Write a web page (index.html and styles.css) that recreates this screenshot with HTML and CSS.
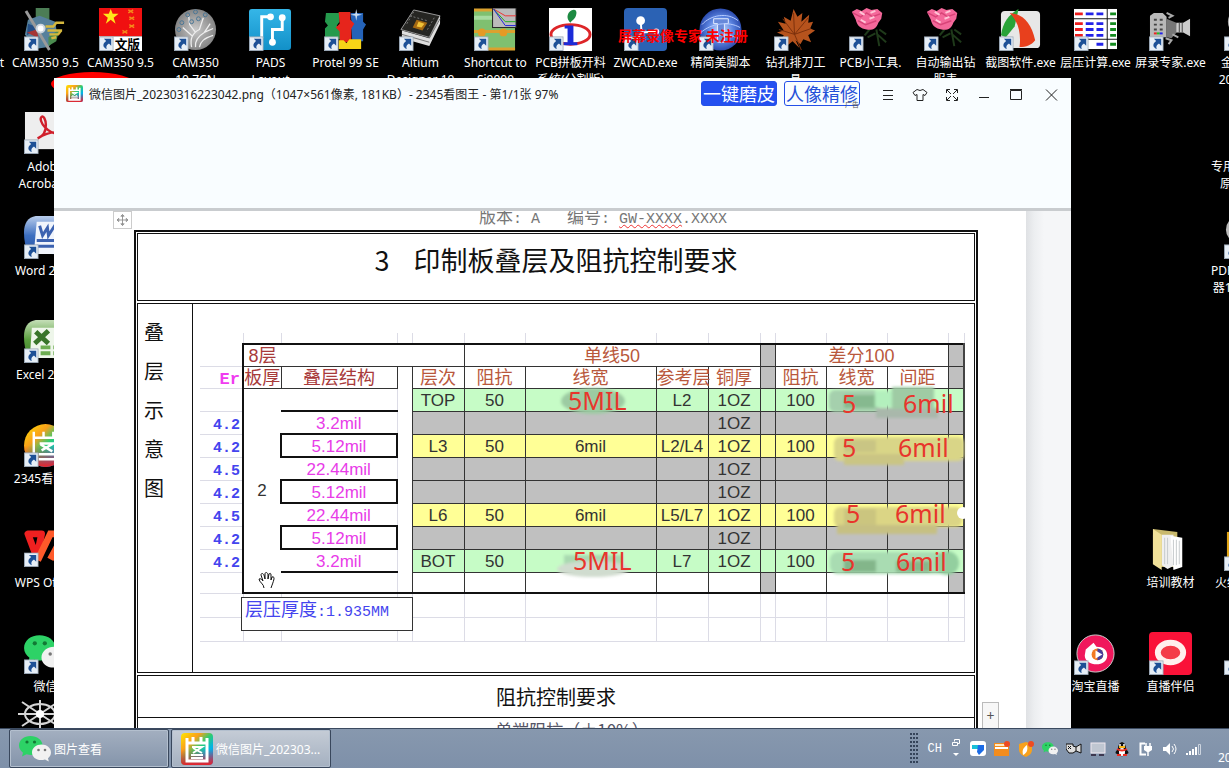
FILE: index.html
```html
<!DOCTYPE html>
<html lang="zh-CN">
<head>
    <meta charset="UTF-8">
    <meta name="viewport" content="width=device-width, initial-scale=1.0">
    <title>2345看图王</title>
    <link rel="stylesheet" href="styles.css">
</head>

<body>
    <!-- shared icons -->
    <svg class="sprite" aria-hidden="true">
        <defs>
            <linearGradient id="rainbow" x1="0" y1="0" x2="1" y2="1">
                <stop offset="0" stop-color="#ffe600"/><stop offset=".3" stop-color="#f9a01b"/><stop offset=".5" stop-color="#2ecc71"/><stop offset=".7" stop-color="#00b4e6"/><stop offset="1" stop-color="#2b6de0"/>
            </linearGradient>
            <linearGradient id="hot" x1="0" y1="0" x2="0" y2="1">
                <stop offset=".5" stop-color="#e8222a" stop-opacity="0"/><stop offset="1" stop-color="#e8222a"/>
            </linearGradient>
            <linearGradient id="pads" x1="0" y1="0" x2="0" y2="1">
                <stop offset="0" stop-color="#35b6e8"/><stop offset="1" stop-color="#1290c8"/>
            </linearGradient>
            <linearGradient id="word" x1="0" y1="0" x2="0" y2="1">
                <stop offset="0" stop-color="#b9cdec"/><stop offset=".5" stop-color="#3d6fc0"/><stop offset="1" stop-color="#2450a0"/>
            </linearGradient>
            <linearGradient id="excel" x1="0" y1="0" x2="0" y2="1">
                <stop offset="0" stop-color="#c5dfb8"/><stop offset=".5" stop-color="#5ba03f"/><stop offset="1" stop-color="#3b7a25"/>
            </linearGradient>
            <radialGradient id="globe">
                <stop offset="0" stop-color="#cfe0ff"/><stop offset=".6" stop-color="#5a83e0"/><stop offset="1" stop-color="#2c4cae"/>
            </radialGradient>
            <radialGradient id="moon">
                <stop offset="0" stop-color="#c8c8c8"/><stop offset="1" stop-color="#858585"/>
            </radialGradient>
            <filter id="soft"><feGaussianBlur stdDeviation="1.500"/></filter>
        </defs>
        <symbol id="shortcut" viewBox="0 0 15 15">
            <rect x=".5" y=".5" width="14" height="14" fill="#e6eef6" stroke="#9aa7b5"/>
            <path d="M5 2.500h7.500v7l-2.300-2.200C7.500 9 7 10.500 8 13 4 11.500 3 8 7.300 4.800z" fill="#1d5096"/>
        </symbol>
        <symbol id="viewer" viewBox="0 0 32 32">
            <rect width="32" height="32" rx="4" fill="url(#rainbow)"/>
            <rect width="32" height="32" rx="4" fill="url(#hot)"/>
            <path d="M6 5v23h20V5M12 4v5M20 4v5M5 10h22" fill="none" stroke="#fff" stroke-width="3"/>
            <path d="M11 14h10l-9 6M12 15l9 5M10 22h12M10 25h12" fill="none" stroke="#fff" stroke-width="2"/>
        </symbol>
        <symbol id="wechat" viewBox="0 0 32 27">
            <path d="M11.500 1C5 1 0 5 0 10.500c0 3 1.700 5.500 4 7.200L3 21.500l4.500-2.300c9 2.500 16-2 16-8.700C23.500 5 18 1 11.500 1z" fill="#2dd266"/>
            <circle cx="8" cy="7" r="1.600" fill="#127a35"/><circle cx="15.500" cy="7" r="1.600" fill="#127a35"/>
            <path d="M22.500 9.500c5.200 0 9.500 3.500 9.500 8 0 2.300-1.200 4.300-3 5.800l.8 3.200-3.800-2C19 26.500 13 23 13 17.500c0-4.500 4.300-8 9.500-8z" fill="#f1f1f1"/>
            <circle cx="19.500" cy="15" r="1.300" fill="#777"/><circle cx="26" cy="15" r="1.300" fill="#777"/>
        </symbol>
        <symbol id="rose" viewBox="0 0 44 44">
            <path d="M25 22l3 17M24 26l-8 4M26 27l9 8M18 22l-5 6M28 22l7 5" stroke="#1f3a1a" stroke-width="2" fill="none"/>
            <path d="M0 4l5-3 5 2 5-3 5 2 6-1 5 4-1 6-3 4c-2 6-6 8-12 7C9 21 5 18 4 12z" fill="#f4689a"/>
            <path d="M1 5l8 4 6-4 6 4 8-3M6 13l8 4 11-4" stroke="#d84478" stroke-width="1.500" fill="none"/>
            <path d="M8 4l5 3M19 5l5-2M9 12l5 3M18 11l5-2" stroke="#ffc4d6" stroke-width="2"/>
        </symbol>
    </svg>

    <main class="desktop">
        <div class="red-blob"></div>
        <nav class="icons">
            <a href="#" class="icon c0 r1 cut"><span>t</span></a>
            <a href="#" class="icon c1 r1">
                <svg viewBox="0 0 44 44">
                    <path d="M12 0h14v12H12z" fill="#4c7d55"/><path d="M4 12l12-4 16 6 2 14-9 12-14 2L1 27z" fill="#56809c"/>
                    <path d="M4 16l11 4-12 8z" fill="#244f86"/><path d="M3 25l10-3 2 9z" fill="#a63635"/>
                    <path d="M25 30l11-8-3 12-8 5z" fill="#4b8c50"/>
                    <path d="M22 19h8l3-4h8M24 23h15M26 27h9l3-4M28 31l5-1" stroke="#d5b83e" stroke-width="2.500" fill="none"/>
                    <path d="M2 3l24 40" stroke="#9a9a9a" stroke-width="3"/><circle cx="17" cy="21" r="5" fill="#ccd5df"/><circle cx="17" cy="21" r="3" fill="#fff"/>
                    <use href="#shortcut" y="29" width="15" height="15"/>
                </svg><span>CAM350 9.5</span></a>
            <a href="#" class="icon c2 r1">
                <svg viewBox="0 0 44 44">
                    <rect width="44" height="29" fill="#f01010"/><rect y="29" width="44" height="15" fill="#fff"/>
                    <path d="M12 1l2 5h6l-5 4 2 6-5-4-5 4 2-6-5-4h6z" fill="#ffe81a"/>
                    <path d="M30 2l5 3M30 5l5-3M31 9l5 3M31 12l5-3M31 17l5 3M31 20l5-3M24 23l5 3M24 26l5-3" stroke="#f58a1a" stroke-width="1.500"/>
                    <text x="16" y="42" class="flag-text">文版</text>
                    <use href="#shortcut" y="29" width="15" height="15"/>
                </svg><span>CAM350 9.5</span></a>
            <a href="#" class="icon c3 r1">
                <svg viewBox="0 0 44 44">
                    <circle cx="22" cy="22" r="21" fill="url(#moon)"/>
                    <path d="M18 40c-2-9 2-15 8-18l4-12M22 40c-1-8 4-12 9-15l6-9M26 40c1-6 5-9 14-12M22 25l-6-8-1-9M19 29l-10-9M31 25l9-4" stroke="#eee" stroke-width="1.300" fill="none"/>
                    <g fill="none" stroke="#4a7696"><circle cx="8" cy="15" r="2"/><circle cx="14" cy="7" r="2"/><circle cx="22" cy="4" r="2"/><circle cx="18" cy="14" r="2"/><circle cx="32" cy="7" r="2"/><circle cx="25" cy="11" r="2"/><circle cx="5" cy="22" r="2"/></g>
                    <use href="#shortcut" y="29" width="15" height="15"/>
                </svg><span>CAM350<br>10.7CN</span></a>
            <a href="#" class="icon c4 r1">
                <svg viewBox="0 0 44 44">
                    <rect y="1" width="43" height="42" rx="3" fill="url(#pads)"/>
                    <path d="M13 31V9h8M34 11v11H24v12" fill="none" stroke="#fff" stroke-width="3"/>
                    <circle cx="22" cy="9" r="3.500" fill="#fff"/><circle cx="34" cy="10" r="3.500" fill="#fff"/><circle cx="24" cy="35" r="3.500" fill="#fff"/>
                    <use href="#shortcut" y="29" width="15" height="15"/>
                </svg><span>PADS<br>Layout</span></a>
            <a href="#" class="icon c5 r1">
                <svg viewBox="0 0 44 44">
                    <path d="M2 5h14v9l-3 4 4 5v9H1V21l3-3-3-4z" fill="#259a4d"/>
                    <path d="M27 5h13v9l3 3-3 5v12H29l-1-12-4-5 4-4z" fill="#2563b8"/>
                    <path d="M15 4h12v8l4 4-3 5v14H16V24l-4-4 4-4z" fill="#e6251c"/>
                    <path d="M15 33h5l3 3 3-4h12v10H15z" fill="#f7d417"/>
                    <path d="M33 1l1 5 5 1-5 1-1 5-1-5-5-1 5-1z" fill="#cde"/>
                    <use href="#shortcut" y="29" width="15" height="15"/>
                </svg><span>Protel 99 SE</span></a>
            <a href="#" class="icon c6 r1">
                <svg viewBox="0 0 44 44">
                    <path d="M15 2l27 6-11 22L2 22z" fill="#252522" stroke="#999"/><path d="M42 8v8L31 39 3 31v-8l28 8z" fill="#dedede"/>
                    <path d="M31 31l11-20M3 27l28 8" stroke="#777"/><path d="M18 12l11 3-5 8-10-3z" fill="#a46812"/><path d="M20 14l6 2-3 4-5-1z" fill="#f0c238"/>
                    <path d="M15 4l-8 14M36 10l-8 14M11 8l18 5" stroke="#777" stroke-dasharray="2"/>
                    <use href="#shortcut" y="29" width="15" height="15"/>
                </svg><span>Altium<br>Designer 10</span></a>
            <a href="#" class="icon c7 r1">
                <svg viewBox="0 0 44 44">
                    <rect y="1" width="42" height="42" fill="#7fc070"/><path d="M0 2h20M0 42h42M0 24h42" stroke="#dba12e" stroke-width="3"/>
                    <path d="M0 10h42" stroke="#a7dba0" stroke-width="4"/><circle cx="8" cy="25" r="4" fill="#e59a25"/><circle cx="30" cy="25" r="4" fill="#e59a25"/>
                    <rect x="19" y="0" width="24" height="20" fill="#bbb" stroke="#222"/>
                    <path d="M20 1l12 7h11" stroke="#e33" fill="none"/><path d="M20 1l12 13h11" stroke="#2a2" fill="none"/><path d="M20 1l12 17h11" stroke="#22d" fill="none"/>
                    <use href="#shortcut" y="29" width="15" height="15"/>
                </svg><span>Shortcut to<br>Si9000</span></a>
            <a href="#" class="icon c8 r1">
                <svg viewBox="0 0 44 44">
                    <rect width="44" height="44" fill="#fff"/>
                    <ellipse cx="22" cy="27" rx="20" ry="10" fill="none" stroke="#dd2528" stroke-width="3"/>
                    <path d="M16 18h9v17h4v3H15v-3h4V21h-3z" fill="#1b2bd8"/><path d="M20 5c4-5 9-4 8 1-1 6-4 6-6 9-3-3-4-6-2-10z" fill="#1d8a42"/>
                    <use href="#shortcut" y="29" width="15" height="15"/>
                </svg><span>PCB拼板开料<br>系统(分割版)</span></a>
            <a href="#" class="icon c9 r1">
                <svg viewBox="0 0 44 44">
                    <rect width="44" height="44" rx="4" fill="#2b62b4"/>
                    <path d="M17 13l1 12-7 10M18 25l14-1" stroke="#fff" stroke-width="2" fill="none"/><circle cx="17" cy="13" r="4.500" fill="#fff"/><circle cx="33" cy="24" r="3" fill="#fff"/>
                    <use href="#shortcut" y="29" width="15" height="15"/>
                </svg><span>ZWCAD.exe</span></a>
            <a href="#" class="icon c10 r1">
                <svg viewBox="0 0 44 44">
                    <circle cx="22" cy="22" r="21.500" fill="url(#globe)"/>
                    <path d="M15 11h15v5h-4v19h-7V16h-4z" fill="#6889da" stroke="#e5eeff"/><path d="M3 17c9-10 26-13 37-4M2 25c10-9 28-12 40-5M6 34c9-7 23-9 34-3" stroke="#b5cbff" fill="none"/>
                    <use href="#shortcut" y="29" width="15" height="15"/>
                </svg><span>精简美脚本</span></a>
            <a href="#" class="icon c11 r1">
                <svg viewBox="0 0 44 44">
                    <path d="M20 1l4 8 5-4-1 9 8-7-1 8 5-1-3 7 5 2-7 5 3 7-8-3-3 5-5-4 4 8-7-7-6 5 1-7-8 2 4-6-7-3 7-2-6-9 8 2-2-7 7 4z" fill="#b6531d"/>
                    <path d="M21 27L20 5M21 27L9 11M21 27L35 10M21 27L5 22M21 27l17-6M21 27l7 16" stroke="#7c300c" fill="none"/>
                    <use href="#shortcut" y="29" width="15" height="15"/>
                </svg><span>钻孔排刀工<br>具</span></a>
            <a href="#" class="icon c12 r1">
                <svg viewBox="0 0 44 44"><use href="#rose" x="3" width="44" height="44"/><use href="#shortcut" y="29" width="15" height="15"/></svg><span>PCB小工具.</span></a>
            <a href="#" class="icon c13 r1">
                <svg viewBox="0 0 44 44"><use href="#rose" x="3" width="44" height="44"/><use href="#shortcut" y="29" width="15" height="15"/></svg><span>自动输出钻<br>服表</span></a>
            <a href="#" class="icon c14 r1">
                <svg viewBox="0 0 44 44">
                    <rect x="2" y="3" width="40" height="38" rx="4" fill="#e7e7e7"/><path d="M2 28C4 14 10 7 20 1l-4 18-9 11z" fill="#29a338"/><path d="M11 5c13 1 22 10 26 28-4 5-9 7-16 7C23 25 19 13 11 5z" fill="#e8401d"/>
                    <use href="#shortcut" y="29" width="15" height="15"/>
                </svg><span>截图软件.exe</span></a>
            <a href="#" class="icon c15 r1">
                <svg viewBox="0 0 44 44">
                    <rect y="1" width="44" height="41" fill="#fff"/><path d="M34 1v41M0 11h44M0 32h44" stroke="#111"/>
                    <path d="M1 6h8M1 16h8M1 22h8M1 28h8" stroke="#ee1c1c" stroke-width="3"/>
                    <path d="M12 6h8M23 6h7M12 16h8M23 16h7M12 22h8M23 22h7M12 28h8M23 28h7M23 37h7" stroke="#2222e8" stroke-width="3"/>
                    <path d="M37 6h6M37 16h6M37 22h6M37 28h6M37 37h6" stroke="#138a1e" stroke-width="3"/>
                    <use href="#shortcut" y="29" width="15" height="15"/>
                </svg><span>层压计算.exe</span></a>
            <a href="#" class="icon c16 r1">
                <svg viewBox="0 0 44 44">
                    <path d="M1 8l4-3h9l4 4v21H1z" fill="#b9b9b9"/><path d="M5 12h3M11 12h3M5 17h3M11 17h3M5 22h3M11 22h3" stroke="#444" stroke-width="2"/>
                    <path d="M18 11l10 4 2 8-7 8-5-1z" fill="#777"/><path d="M28 15h7l7-4v18l-7-4h-7z" fill="#ccc"/><path d="M34 15v10M31 15v10" stroke="#444"/>
                    <path d="M18 5l6 3-4 2M17 31l6 2-3 4M24 27l6 3" stroke="#aaa" stroke-width="2" fill="none"/><path d="M5 26h3" stroke="#e22" stroke-width="2"/><path d="M8 26h3" stroke="#2b2" stroke-width="2"/><path d="M11 26h3" stroke="#22e" stroke-width="2"/>
                    <use href="#shortcut" y="29" width="15" height="15"/>
                </svg><span>屏录专家.exe</span></a>
            <a href="#" class="icon c17 r1 edge">
                <svg viewBox="0 0 44 44"><circle cx="18" cy="14" r="14" fill="#aaa"/><use href="#shortcut" y="29" width="15" height="15"/></svg><span>&nbsp;金<br>20</span></a>

            <a href="#" class="icon c1 r2">
                <svg viewBox="0 0 44 44">
                    <rect x="1" width="42" height="38" fill="#eee"/><path d="M14 27c13-5 8-25 4-22s6 19 20 17c-8-3-16 0-24 5z" fill="none" stroke="#d01f2b" stroke-width="2.500"/>
                    <use href="#shortcut" y="28" width="15" height="15"/>
                </svg><span>Adobe<br>Acrobat 9</span></a>
            <a href="#" class="icon c1 r3">
                <svg viewBox="0 0 44 44">
                    <path d="M12 0h30v40L4 37q-4-8-4-20Q0 2 12 0z" fill="url(#word)"/><path d="M13 6h31v33H10z" fill="#f1f5fc"/>
                    <path d="M16 10l3 10 5-8 1 8 7-11M13 25h31M13 31h31" fill="none" stroke="#3c62b0" stroke-width="3"/>
                    <use href="#shortcut" y="29" width="15" height="15"/>
                </svg><span>Word 2007</span></a>
            <a href="#" class="icon c1 r4">
                <svg viewBox="0 0 44 44">
                    <path d="M12 0h30v40L4 37q-4-8-4-20Q0 2 12 0z" fill="url(#excel)"/><path d="M8 8h36v31H6z" fill="#eef6ea"/>
                    <path d="M12 12l13 12M25 11L11 24" stroke="#39752a" stroke-width="5"/><path d="M17 28h10M30 28h12M17 34h10M30 34h12M31 22h12" stroke="#6dad51" stroke-width="4"/>
                    <use href="#shortcut" y="29" width="15" height="15"/>
                </svg><span>Excel 2007</span></a>
            <a href="#" class="icon c1 r5">
                <svg viewBox="0 0 44 44">
                    <circle cx="22" cy="22" r="22" fill="url(#rainbow)"/><circle cx="22" cy="22" r="22" fill="url(#hot)"/>
                    <path d="M10 36V14h24v22M10 14V8M20 14V8M30 14V8M16 20h14l-12 7M17 21l12 7M15 31h16M15 36h16" fill="none" stroke="#fff" stroke-width="2.500"/>
                    <use href="#shortcut" y="29" width="15" height="15"/>
                </svg><span>2345看图王</span></a>
            <a href="#" class="icon c1 r6">
                <svg viewBox="0 0 44 44">
                    <path d="M4 6h14L13 30z" fill="none" stroke="#ef2020" stroke-width="7" stroke-linejoin="round"/><path d="M14 33L27 6h6M27 32L40 8" fill="none" stroke="#ff5a2a" stroke-width="7"/>
                    <use href="#shortcut" y="25" width="15" height="15"/>
                </svg><span>WPS Office</span></a>
            <a href="#" class="icon c1 r7">
                <svg viewBox="0 0 44 44"><use href="#wechat" y="2" width="44" height="37"/><use href="#shortcut" y="28" width="15" height="15"/></svg><span>微信</span></a>

            <a href="#" class="icon c17 r2 edge"><svg viewBox="0 0 44 44"></svg><span>专用<br>&nbsp;&nbsp;原</span></a>
            <a href="#" class="icon c17 r3 edge">
                <svg viewBox="0 0 44 44"><circle cx="16" cy="14" r="14" fill="#bbb"/><use href="#shortcut" y="29" width="15" height="15"/></svg><span>PDF<br>器1</span></a>
            <a href="#" class="icon c16 r6">
                <svg viewBox="0 0 44 44">
                    <path d="M4 1l25 3v36H12z" fill="#c9b96c"/><path d="M13 7h12v32l-6 3-6-4z" fill="#efefef"/><path d="M22 8l12 2v30l-9 3z" fill="#fff"/>
                    <path d="M16 10v27M19 10v27M25 12v26M28 12v26M31 13v24" stroke="#c6cacc"/><path d="M4 1l9 6v36l-9-6z" fill="#f1e19a"/>
                </svg><span>培训教材</span></a>
            <a href="#" class="icon c17 r6 edge">
                <svg viewBox="0 0 44 44"><rect x="3" y="4" width="38" height="38" fill="#e0a416"/><use href="#shortcut" y="29" width="15" height="15"/></svg><span>火绒</span></a>
            <a href="#" class="icon c15 r7">
                <svg viewBox="0 0 44 44">
                    <circle cx="22" cy="22" r="19" fill="#f0185c" stroke="#ccc"/><path d="M12 18l8-7 3 4c7 0 11 3 11 9s-5 9-11 9-12-3-12-9z" fill="#fff"/><circle cx="24" cy="23" r="6" fill="#f37a21"/><path d="M24 17a6 6 0 010 12z" fill="#473d9a"/><path d="M22 19l7 4-7 4z" fill="#fff"/>
                    <use href="#shortcut" y="29" width="15" height="15"/>
                </svg><span>淘宝直播</span></a>
            <a href="#" class="icon c16 r7">
                <svg viewBox="0 0 44 44">
                    <rect width="44" height="44" rx="4" fill="#fa1238"/><ellipse cx="22" cy="21" rx="13" ry="10" fill="#f43c48" stroke="#fff0ed" stroke-width="6"/>
                    <use href="#shortcut" y="29" width="15" height="15"/>
                </svg><span>直播伴侣</span></a>
            <a href="#" class="icon c17 r7 edge" aria-label="快捷方式">
                <svg viewBox="0 0 44 44"><use href="#shortcut" y="29" width="15" height="15"/></svg></a>
        </nav>
        <svg class="wheel" viewBox="0 0 44 28">
            <path d="M22 0v28M0 14h44M4 2l36 24M40 2L4 26" stroke="#d5d5d5" stroke-width="2"/>
            <ellipse cx="22" cy="14" rx="15" ry="10" fill="none" stroke="#d5d5d5" stroke-width="2"/><circle cx="22" cy="14" r="4" fill="#fff"/>
        </svg>
        <p class="watermark">屏幕录像专家 未注册</p>

        <section class="window">
            <header class="titlebar">
                <svg class="app-icon" viewBox="0 0 32 32"><use href="#viewer"/></svg>
                <h1>微信图片_20230316223042.png（1047×561像素, 181KB）- 2345看图王 - 第1/1张 97%</h1>
                <button class="promo promo-fill">一键磨皮</button>
                <button class="promo">人像精修<small>广告</small></button>
                <div class="controls">
                    <button aria-label="菜单"><svg viewBox="0 0 16 16"><path d="M3 3.500h10M3 8.500h10M3 12.500h10"/></svg></button>
                    <button aria-label="皮肤"><svg viewBox="0 0 16 16"><path d="M5 2.500q3 2 6 0l4 3-2 3-2-1v6H5v-6l-2 1-2-3z"/></svg></button>
                    <button aria-label="全屏"><svg viewBox="0 0 16 16"><path d="M2.500 6V2.500H6M10 2.500h3.500V6M13.500 10v3.500H10M6 13.500H2.500V10M3 3l4 4M9 9l4 4M13 3L9 7M7 9l-4 4"/></svg></button>
                    <button aria-label="最小化"><svg viewBox="0 0 16 16"><path d="M3 10.500h10"/></svg></button>
                    <button aria-label="最大化"><svg viewBox="0 0 16 16"><path d="M2.500 3.500h11v9h-11zM2 2.500h12"/></svg></button>
                    <button class="close" aria-label="关闭"><svg viewBox="0 0 16 16"><path d="M2 2.500l11 11M13 2.500l-11 11"/></svg></button>
                </div>
            </header>
            <div class="toolbar"></div>

            <div class="viewer">
                <div class="page">
                    <svg class="move-handle" viewBox="0 0 19 19"><path d="M9.500 3v13M3 9.500h13M7.500 5l2-2 2 2zM7.500 14l2 2 2-2zM5 7.500l-2 2 2 2zM14 7.500l2 2-2 2z"/></svg>
                    <button class="add-row">+</button>
                    <p class="doc-head"><b>版本</b>: A&nbsp;&nbsp; <b>编号</b>: <u>GW-XXXX</u>.XXXX</p>
                    <div class="doc">
                        <h2 class="doc-title">3&nbsp;&nbsp;&nbsp; 印制板叠层及阻抗控制要求</h2>
                        <div class="stack">
                            <div class="stack-name"><span>叠层示意图</span></div>
                            <div class="sheet">
                                <table>
                                    <colgroup>
                                        <col class="w43"><col class="w38"><col class="w116"><col class="w15"><col class="w52"><col class="w61"><col class="w131"><col class="w52"><col class="w52"><col class="w15"><col class="w51"><col class="w61"><col class="w61"><col class="w16">
                                    </colgroup>
                                    <tbody>
                                        <tr class="stub">
                                            <td></td><td></td><td></td><td></td><td></td><td></td><td></td><td></td><td></td><td></td><td></td><td></td><td></td><td class="edge-line"></td>
                                        </tr>
                                        <tr class="head top">
                                            <td class="er"></td><td class="thick-l bb">8层</td><td class="bb"></td><td class="bb"></td><td class="bb"></td>
                                            <th colspan="4" class="b brown">单线50</th><td class="b g"></td><th colspan="3" class="b brown">差分100</th><td class="b g edge-line"></td>
                                        </tr>
                                        <tr class="head">
                                            <td class="er magenta">Er</td><th class="b thick-l">板厚</th><th class="b">叠层结构</th><td></td>
                                            <th class="b brown">层次</th><th class="b brown">阻抗</th><th class="b brown">线宽</th><th class="b brown">参考层</th><th class="b brown">铜厚</th><td class="b g"></td>
                                            <th class="b brown">阻抗</th><th class="b brown">线宽</th><th class="b brown">间距</th><td class="b g edge-line"></td>
                                        </tr>
                                        <tr class="green">
                                            <td class="er"></td><td class="thick-l total" rowspan="9">2</td><td class="mil thick-b"></td><td class="gap"></td>
                                            <td class="b">TOP</td><td class="b">50</td><td class="b"></td><td class="b">L2</td><td class="b">1OZ</td><td class="b"></td><td class="b">100</td><td class="b"></td><td class="b"></td><td class="b edge-line"></td>
                                        </tr>
                                        <tr class="gray">
                                            <td class="er">4.2</td><td class="mil">3.2mil</td><td class="gap"></td>
                                            <td class="b"></td><td class="b"></td><td class="b"></td><td class="b"></td><td class="b">1OZ</td><td class="b"></td><td class="b"></td><td class="b"></td><td class="b"></td><td class="b edge-line"></td>
                                        </tr>
                                        <tr class="yellow">
                                            <td class="er">4.2</td><td class="mil box">5.12mil</td><td class="gap"></td>
                                            <td class="b">L3</td><td class="b">50</td><td class="b">6mil</td><td class="b">L2/L4</td><td class="b">1OZ</td><td class="b"></td><td class="b">100</td><td class="b"></td><td class="b"></td><td class="b edge-line"></td>
                                        </tr>
                                        <tr class="gray">
                                            <td class="er">4.5</td><td class="mil">22.44mil</td><td class="gap"></td>
                                            <td class="b"></td><td class="b"></td><td class="b"></td><td class="b"></td><td class="b">1OZ</td><td class="b"></td><td class="b"></td><td class="b"></td><td class="b"></td><td class="b edge-line"></td>
                                        </tr>
                                        <tr class="gray">
                                            <td class="er">4.2</td><td class="mil box">5.12mil</td><td class="gap"></td>
                                            <td class="b"></td><td class="b"></td><td class="b"></td><td class="b"></td><td class="b">1OZ</td><td class="b"></td><td class="b"></td><td class="b"></td><td class="b"></td><td class="b edge-line"></td>
                                        </tr>
                                        <tr class="yellow">
                                            <td class="er">4.5</td><td class="mil">22.44mil</td><td class="gap"></td>
                                            <td class="b">L6</td><td class="b">50</td><td class="b">6mil</td><td class="b">L5/L7</td><td class="b">1OZ</td><td class="b"></td><td class="b">100</td><td class="b"></td><td class="b"></td><td class="b edge-line"></td>
                                        </tr>
                                        <tr class="gray">
                                            <td class="er">4.2</td><td class="mil box">5.12mil</td><td class="gap"></td>
                                            <td class="b"></td><td class="b"></td><td class="b"></td><td class="b"></td><td class="b">1OZ</td><td class="b"></td><td class="b"></td><td class="b"></td><td class="b"></td><td class="b edge-line"></td>
                                        </tr>
                                        <tr class="green">
                                            <td class="er">4.2</td><td class="mil thick-b">3.2mil</td><td class="gap"></td>
                                            <td class="b">BOT</td><td class="b">50</td><td class="b"></td><td class="b">L7</td><td class="b">1OZ</td><td class="b"></td><td class="b">100</td><td class="b"></td><td class="b"></td><td class="b edge-line"></td>
                                        </tr>
                                        <tr class="bottom">
                                            <td class="er"></td><td></td><td class="gap"></td>
                                            <td class="b"></td><td class="b"></td><td class="b"></td><td class="b"></td><td class="b"></td><td class="b g"></td><td class="b"></td><td class="b"></td><td class="b"></td><td class="b g edge-line"></td>
                                        </tr>
                                        <tr class="spare">
                                            <td></td><td></td><td></td><td></td><td></td><td></td><td></td><td></td><td></td><td></td><td></td><td></td><td></td><td class="edge-line"></td>
                                        </tr>
                                        <tr class="spare">
                                            <td></td><td></td><td></td><td></td><td></td><td></td><td></td><td></td><td></td><td></td><td></td><td></td><td></td><td class="edge-line"></td>
                                        </tr>
                                    </tbody>
                                </table>
                                <!-- painted-over values -->
                                <svg class="smudges" viewBox="0 0 764 310">
                                    <g filter="url(#soft)">
                                        <ellipse cx="393" cy="68" rx="32" ry="13" fill="#9ccba2"/>
                                        <rect x="364" y="222" width="58" height="14" fill="#a9d9b0"/><ellipse cx="393" cy="236" rx="36" ry="8" fill="#d0dccf"/>
                                        <rect x="629" y="57" width="50" height="22" rx="6" fill="#a5d0ad"/><rect x="644" y="62" width="32" height="13" fill="#86b98f"/>
                                        <rect x="675" y="58" width="30" height="16" fill="#b3f0bd"/><rect x="676" y="75" width="62" height="10" fill="#a9b8ab"/><rect x="692" y="54" width="42" height="22" fill="#9fcba4"/>
                                        <rect x="634" y="104" width="130" height="24" rx="6" fill="#d9d587"/><rect x="644" y="107" width="32" height="12" fill="#c9c584"/><rect x="644" y="121" width="60" height="11" fill="#cac584"/>
                                        <rect x="634" y="174" width="128" height="20" rx="6" fill="#dbd585"/><rect x="644" y="176" width="32" height="18" fill="#cbc57f"/><rect x="637" y="192" width="100" height="9" fill="#c6c083"/>
                                        <rect x="630" y="219" width="120" height="22" rx="8" fill="#a9dcb2"/><rect x="644" y="227" width="32" height="12" fill="#83b68a"/><rect x="696" y="228" width="34" height="11" fill="#86b98c"/><circle cx="747" cy="230" r="12" fill="#93cf9f"/>
                                    </g>
                                    <circle cx="763" cy="180" r="6" fill="#fff"/>
                                </svg>
                                <span class="note n1">5MIL</span><span class="note n2">5MIL</span>
                                <span class="note n3">5</span><span class="note n4">6mil</span>
                                <span class="note n5">5</span><span class="note n6">6mil</span>
                                <span class="note n7">5</span><span class="note n8">6mil</span>
                                <span class="note n9">5</span><span class="note n10">6mil</span>
                                <p class="thickness"><b>层压厚度</b>:1.935MM</p>
                                <svg class="hand" viewBox="0 0 18 18"><path d="M6 17c0-4-5-6-5-9 2-1 3 1 4 2L3 4c0-2 2-2 3 0l1 4V3c0-2 2-2 3 0v5l1-5c1-1 2-1 2 1v5l1-3c2-1 2 1 2 2-1 4-2 6-3 9" fill="#fff" stroke="#111"/></svg>
                            </div>
                        </div>
                        <div class="require">
                            <h3>阻抗控制要求</h3>
                            <p>单端阻抗（±10%）</p>
                        </div>
                    </div>
                </div>
                <div class="gutter"></div>
            </div>
        </section>
    </main>

    <footer class="taskbar">
        <button class="task"><svg class="task-wechat" viewBox="0 0 32 27"><use href="#wechat"/></svg>图片查看</button>
        <button class="task active"><svg viewBox="0 0 32 32"><use href="#viewer"/></svg>微信图片_202303...</button>
        <div class="grip"></div>
        <span class="lang">CH</span>
        <svg class="lang-menu" viewBox="0 0 10 20"><path d="M3.500 2.500V.5h5v4h-2M1.500 3.500h5v3h-5z" fill="none" stroke="#fff"/><path d="M2 14h6l-3 3z" fill="#fff"/></svg>
        <div class="tray">
            <svg viewBox="0 0 16 16"><rect width="16" height="15" rx="3" fill="#fff"/><path d="M2 4h9v4H2z" fill="#19c0d8"/><path d="M8 4h6v5l-5 5-2-3z" fill="#1b6be6"/></svg>
            <svg viewBox="0 0 16 16"><rect y="2" width="15" height="13" fill="#f28c1d"/><rect x="1" y="3" width="10" height="2" fill="#ffe9c4"/><path d="M1 7h13" stroke="#fff" stroke-width="2"/><circle cx="13" cy="3" r="3" fill="#ee4b22"/></svg>
            <svg viewBox="0 0 16 16"><path d="M1 3l7-2 6 2v6c0 3-2 5-6 7-5-2-7-4-7-8z" fill="#f7a11c"/><path d="M9 4c-4 3-5 5-4 10 4-2 5-5 4-10z" fill="#fff"/><circle cx="13" cy="3" r="3" fill="#ee4b22"/></svg>
            <svg viewBox="0 0 16 16"><use href="#wechat" width="16" height="15"/></svg>
            <svg viewBox="0 0 16 16"><path d="M0 3h7v2l3 1 5-3v9l-5-2-3 2H3l-3-4z" fill="#ddd" stroke="#111"/><path d="M2 5l3 3M5 5L2 8M10 6v4" stroke="#111"/></svg>
            <svg viewBox="0 0 16 16"><rect x="1" y="2" width="14" height="10" fill="#bfc6d1" stroke="#f0e8ef"/><path d="M1 14h5M9 14h5" stroke="#3d3850" stroke-width="2"/></svg>
            <svg viewBox="0 0 16 16"><path d="M4 8c0-9 8-9 8 0 5 5 1 5 0 5-1 3-7 3-8 0-1 0-5 0 0-5z" fill="#111"/><ellipse cx="8" cy="11" rx="3" ry="4" fill="#fff"/><path d="M3 8q5 3 10 0M3 14h4M9 14h4" stroke="#ea2d22" stroke-width="2" fill="none"/><circle cx="6" cy="4" r="1" fill="#fff"/><circle cx="10" cy="4" r="1" fill="#fff"/><path d="M5 6h6" stroke="#f9b418" stroke-width="2"/></svg>
            <svg viewBox="0 0 16 16"><path d="M7 2.500H2.500v11H8" fill="none" stroke="#fff" stroke-width="2"/><path d="M6 5h8v4l-3 2H9L6 9z" fill="#fff"/><path d="M8 2v3M12 2v3M10 10v5" stroke="#fff" stroke-width="1.500"/></svg>
            <svg viewBox="0 0 16 16"><path d="M1 6h3l4-4v12l-4-4H1z" fill="#fff"/><path d="M10 5q3 3 0 6M12 3q4 5 0 10" fill="none" stroke="#fff"/></svg>
            <svg viewBox="0 0 16 16"><path d="M1 14v-2M4 14v-4M7 14V8M10 14V6" stroke="#fff" stroke-width="2"/><path d="M12.500 13.500v-10h2v10z" fill="none" stroke="#ccd4df"/></svg>
        </div>
        <span class="clock">20</span>
    </footer>
</body>
</html>
```
FILE: styles.css
```css
* {
    box-sizing: border-box;
}

body {
    margin: 0;
    height: 100vh;
    display: flex;
    flex-direction: column;
    overflow: hidden;
    background: #000;
    font-family: "Noto Sans", "Noto Sans CJK SC", sans-serif;
    font-size: 12px;
}

h1, h2, h3, p {
    margin: 0;
    font-weight: normal;
}

button {
    font-family: inherit;
    border: 0;
    padding: 0;
    background: none;
}

.sprite {
    position: absolute;
    width: 0;
    height: 0;
}

/* desktop */
.desktop {
    position: relative;
    flex: 1;
    min-height: 0;
    overflow: hidden;
}

.icons {
    display: grid;
    grid-template-columns: repeat(18, 75px);
    grid-auto-rows: 104px;
    margin-left: -67px;
}

.icon {
    display: flex;
    flex-direction: column;
    align-items: center;
    padding-top: 8px;
    color: #fff;
    text-decoration: none;
    text-align: center;
    line-height: 17px;
    white-space: nowrap;
}

.icon svg {
    width: 43px;
    height: 43px;
    margin-bottom: 3px;
    flex-shrink: 0;
}

.icon.cut {
    align-items: flex-end;
    padding: 54px 4px 0 0;
}

.icon.edge {
    align-items: flex-start;
    padding-left: 3px;
}

.icon.edge svg {
    margin-left: 13px;
}

.icon.edge.r1 span {
    padding-left: 7px;
}

.icon.edge.r6 span {
    padding-left: 4px;
}

.flag-text {
    font-size: 13px;
    font-weight: bold;
}

.r1 { grid-row: 1; }
.r2 { grid-row: 2; }
.r3 { grid-row: 3; }
.r4 { grid-row: 4; }
.r5 { grid-row: 5; }
.r6 { grid-row: 6; }
.r7 { grid-row: 7; }
.c0 { grid-column: 1; }
.c1 { grid-column: 2; }
.c2 { grid-column: 3; }
.c3 { grid-column: 4; }
.c4 { grid-column: 5; }
.c5 { grid-column: 6; }
.c6 { grid-column: 7; }
.c7 { grid-column: 8; }
.c8 { grid-column: 9; }
.c9 { grid-column: 10; }
.c10 { grid-column: 11; }
.c11 { grid-column: 12; }
.c12 { grid-column: 13; }
.c13 { grid-column: 14; }
.c14 { grid-column: 15; }
.c15 { grid-column: 16; }
.c16 { grid-column: 17; }
.c17 { grid-column: 18; }

.wheel {
    position: absolute;
    left: 18px;
    top: 700px;
    width: 44px;
    height: 28px;
}

.watermark {
    position: absolute;
    left: 618px;
    top: 26px;
    color: #f00;
    font-size: 14px;
    font-weight: bold;
    line-height: 20px;
}

.red-blob {
    position: absolute;
    left: 51px;
    top: 72px;
    width: 83px;
    height: 24px;
    border-radius: 50%;
    background: #f00;
}

/* viewer window */
.window {
    position: absolute;
    left: 54px;
    right: 158px;
    top: 78px;
    bottom: 0;
    display: flex;
    flex-direction: column;
    background: #fff;
}

.titlebar {
    display: flex;
    align-items: center;
    height: 33px;
    padding: 0 0 2px 12px;
    background: #f9fdff;
    color: #222;
}

.titlebar h1 {
    flex: 1;
    margin-left: 6px;
    font-size: 12px;
    white-space: nowrap;
}

.app-icon {
    width: 17px;
    height: 17px;
}

.promo {
    position: relative;
    width: 76px;
    height: 25px;
    margin-right: 7px;
    border: 1px solid #2450e8;
    border-radius: 3px;
    color: #2450d8;
    font-size: 18px;
    line-height: 22px;
    white-space: nowrap;
}

.promo-fill {
    background: #2450f0;
    color: #fff;
}

.promo small {
    position: absolute;
    right: 0;
    bottom: -4px;
    font-size: 7px;
    line-height: 8px;
    color: #555;
}

.controls {
    display: flex;
    margin-left: 5px;
}

.controls button {
    width: 32px;
    height: 31px;
}

.controls .close {
    width: 39px;
}

.controls svg {
    width: 16px;
    height: 16px;
    fill: none;
    stroke: #222;
    vertical-align: middle;
}

.toolbar {
    height: 100px;
    background: #f9fdff;
    border-bottom: 3px solid #c9cccf;
}

.viewer {
    display: flex;
    flex: 1;
    min-height: 0;
    overflow: hidden;
}

.gutter {
    width: 45px;
    background: linear-gradient(to right, #dfe1e4, #eceef0 8px, #f5f6f8 18px);
}

.page {
    position: relative;
    flex: 1;
    padding: 0 48px 0 80px;
    background: #fff;
}

.move-handle {
    position: absolute;
    left: 59px;
    top: 0;
    width: 19px;
    height: 18px;
    border: 1px solid #ccc;
    fill: none;
    stroke: #888;
}

.add-row {
    position: absolute;
    right: 27px;
    bottom: 0;
    width: 17px;
    height: 26px;
    border: 1px solid #bbb;
    border-bottom: 0;
    background: #f7f7f7;
    color: #555;
    font-size: 14px;
}

.doc-head {
    height: 19px;
    padding-left: 345px;
    color: #777;
    font-family: "Liberation Mono", "Noto Sans CJK SC", monospace;
    font-size: 15px;
    line-height: 16px;
    white-space: nowrap;
}

.doc-head b {
    font-size: 17px;
    font-weight: normal;
}

.doc-head u {
    text-decoration: underline wavy #e33 1px;
}

.doc {
    display: flex;
    flex-direction: column;
    gap: 2px;
    padding: 1px;
    border: 2px solid #111;
    color: #111;
    font-family: "Noto Sans CJK SC", sans-serif;
}

.doc-title {
    height: 68px;
    padding-top: 6px;
    border: 1px solid #111;
    font-size: 27px;
    line-height: 40px;
    text-align: center;
}

.stack {
    display: flex;
    height: 370px;
    border: 1px solid #111;
}

.stack-name {
    width: 55px;
    padding: 8px 0 0 6px;
    border-right: 1px solid #111;
}

.stack-name span {
    display: block;
    width: 20px;
    font-size: 20px;
    line-height: 39px;
    word-break: break-all;
}

.sheet {
    position: relative;
    width: 764px;
    height: 310px;
    margin: 29px 0 0 7px;
}

/* layer table */
.sheet table {
    width: 764px;
    table-layout: fixed;
    border-collapse: collapse;
    color: #333;
    font-family: "Liberation Sans", "Noto Sans CJK SC", sans-serif;
    font-size: 17px;
    line-height: 18px;
}

.w15 { width: 15px; }
.w16 { width: 16px; }
.w38 { width: 38px; }
.w43 { width: 43px; }
.w51 { width: 51px; }
.w52 { width: 52px; }
.w61 { width: 61px; }
.w116 { width: 116px; }
.w131 { width: 131px; }

.sheet td,
.sheet th {
    height: 23px;
    padding: 2px 0 0;
    font-weight: normal;
    text-align: center;
    white-space: nowrap;
}

.sheet .stub td {
    height: 11px;
    border-right: 1px solid #dcdce6;
}

.sheet .spare td {
    height: 24px;
    border-right: 1px solid #dcdce6;
    border-bottom: 1px solid #dcdce6;
}

.sheet .head td,
.sheet .head th {
    height: 22px;
    color: #a83a3a;
    font-size: 18px;
}

.sheet .head .brown {
    color: #b9583c;
}

.sheet .b {
    border: 1px solid #333;
}

.sheet .bb {
    border-bottom: 1px solid #333;
}

.sheet .thick-l {
    border-left: 2px solid #111;
}

.sheet .thick-b {
    border-bottom: 2px solid #111;
}

.sheet .box {
    border: 2px solid #111;
}

.sheet .top > :not(.er) {
    border-top: 2px solid #111;
}

.sheet .bottom > :not(.er),
.sheet .total {
    border-bottom: 2px solid #111;
}

.sheet .bottom td {
    height: 21px;
}

.sheet .edge-line {
    border-right: 2px solid #444;
}

.sheet .er {
    padding-right: 2px;
    border-bottom: 1px solid #dcdce6;
    color: #4444ee;
    font-family: "Liberation Mono", monospace;
    font-size: 15px;
    font-weight: bold;
    text-align: right;
    vertical-align: bottom;
    line-height: 16px;
}

.sheet .head .magenta {
    color: #f03cf0;
    font-size: 17px;
}

.sheet .mil {
    color: #e83ce8;
}

.sheet .gap {
    border-left: 1px solid #dcdce6;
}

.green .b {
    background: #c6fcc6;
}

.yellow .b {
    background: #ffff96;
}

.gray .b,
.sheet .g {
    background: #c0c0c0;
}

.smudges {
    position: absolute;
    left: 0;
    top: 0;
    width: 764px;
    height: 310px;
    overflow: visible;
}

.note {
    position: absolute;
    color: #e8352c;
    font-family: "Noto Sans", sans-serif;
    font-size: 25px;
    line-height: 26px;
}

.n1 { left: 368px; top: 54px; }
.n2 { left: 373px; top: 214px; }
.n3 { left: 642px; top: 57px; }
.n4 { left: 703px; top: 57px; }
.n5 { left: 642px; top: 101px; }
.n6 { left: 698px; top: 101px; }
.n7 { left: 646px; top: 167px; }
.n8 { left: 695px; top: 167px; }
.n9 { left: 641px; top: 215px; }
.n10 { left: 696px; top: 215px; }

.thickness {
    position: absolute;
    left: 41px;
    top: 264px;
    width: 172px;
    height: 34px;
    padding-left: 3px;
    border: 1px solid #333;
    background: #fff;
    color: #4444ee;
    font-family: "Liberation Mono", "Noto Sans CJK SC", monospace;
    font-size: 15px;
    line-height: 26px;
    white-space: nowrap;
}

.thickness b {
    font-size: 18px;
    font-weight: normal;
}

.hand {
    position: absolute;
    left: 58px;
    top: 238px;
    width: 18px;
    height: 18px;
}

.require {
    border: 1px solid #111;
    text-align: center;
}

.require h3 {
    height: 42px;
    border-bottom: 1px solid #111;
    font-size: 20px;
    line-height: 42px;
}

.require p {
    padding-left: 32px;
    color: #556;
    font-size: 17px;
    line-height: 24px;
}

/* taskbar */
.taskbar {
    display: flex;
    align-items: center;
    height: 40px;
    padding-left: 9px;
    border-top: 1px solid #3b4a60;
    background: linear-gradient(#8798ae, #7e90a9);
    color: #fff;
    overflow: hidden;
}

.task {
    display: flex;
    align-items: center;
    gap: 3px;
    width: 160px;
    height: 39px;
    margin-right: 2px;
    padding-left: 9px;
    border: 1px solid #39475c;
    border-radius: 2px;
    box-shadow: inset 0 0 0 1px #b3bfce;
    background: linear-gradient(#a3afc0, #8494aa);
    color: #fff;
    font-size: 12px;
    white-space: nowrap;
}

.task.active {
    background: linear-gradient(#c5ccd6, #a4b0c0);
}

.task svg {
    width: 32px;
    height: 32px;
}

.task .task-wechat {
    height: 27px;
}

.grip {
    width: 9px;
    height: 32px;
    margin-left: auto;
    background: radial-gradient(circle at 1px 1px, #35445a 1px, transparent 1px) 0 0 / 3px 4px;
}

.lang {
    margin-left: 9px;
    font-family: "Liberation Mono", monospace;
    font-size: 12px;
}

.lang-menu {
    width: 10px;
    height: 20px;
    margin: 0 9px;
}

.tray {
    display: flex;
    gap: 8px;
}

.tray svg {
    width: 16px;
    height: 16px;
}

.clock {
    width: 11px;
    margin: 18px 0 0 16px;
    white-space: nowrap;
}
```
